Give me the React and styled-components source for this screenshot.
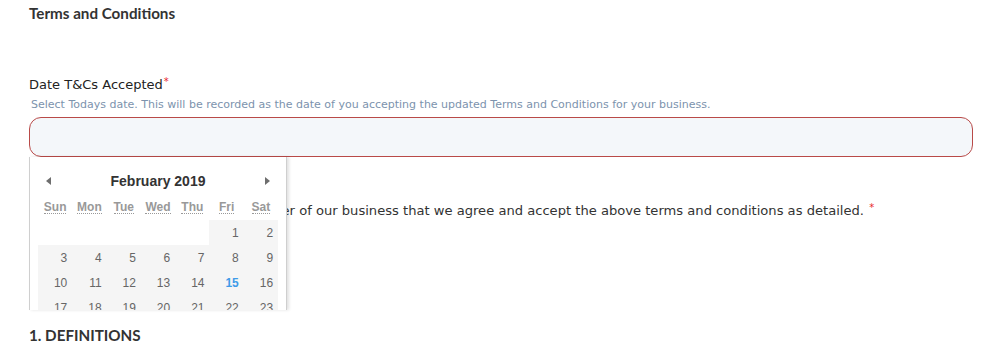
import React from "react";
import styled, { createGlobalStyle } from "styled-components";

const Global = createGlobalStyle`
  html, body { margin: 0; padding: 0; background: #fff; }
  body { font-family: "DejaVu Sans", Verdana, sans-serif; color: #333; }
`;

const Page = styled.div`
  padding: 4px 32px 0 29px;
  width: 1005px;
  box-sizing: border-box;
`;

const Heading = styled.h3`
  margin: 0;
  font-family: Lato, sans-serif;
  font-weight: 700;
  font-size: 15.2px;
  line-height: 18px;
  color: #333;
`;

const Field = styled.div`
  margin-top: 55px;
`;

const Label = styled.label`
  display: block;
  font-size: 13px;
  line-height: 16px;
  color: #222;
`;

const Req = styled.span`
  color: #e8262b;
  font-size: 10px;
  vertical-align: top;
  line-height: 10px;
  margin-left: 1px;
`;

const Help = styled.div`
  margin: 5px 0 0 2px;
  font-size: 11px;
  line-height: 13px;
  color: #7c93ad;
`;

const InputWrap = styled.div`
  position: relative;
  margin-top: 6px;
`;

const Input = styled.div`
  height: 38px;
  border: 1px solid #b94a48;
  border-radius: 12px;
  background: #f4f7fa;
`;

const Popup = styled.div`
  position: absolute;
  top: 100%;
  left: 0;
  width: 258px;
  height: 153px;
  overflow: hidden;
  background: #fff;
  border: 1px solid #cfcfcf;
  border-top: none;
  border-bottom: none;
  box-shadow: 2px 0 3px rgba(0, 0, 0, 0.12);
  padding: 10px 0 0 8px;
  box-sizing: border-box;
  font-family: "Liberation Sans", Arial, sans-serif;
  z-index: 2;
`;

const CalHeader = styled.div`
  display: flex;
  align-items: center;
  justify-content: space-between;
  width: 240px;
  height: 28px;
  padding: 0 8px 0 8px;
  box-sizing: border-box;
`;

const Arrow = styled.span`
  width: 0;
  height: 0;
  border-top: 4px solid transparent;
  border-bottom: 4px solid transparent;
  ${(p) =>
    p.$dir === "left"
      ? "border-right: 5px solid #6e6e6e;"
      : "border-left: 5px solid #6e6e6e;"}
`;

const Month = styled.div`
  font-weight: 700;
  font-size: 14px;
  color: #333;
`;

const Grid = styled.div`
  display: grid;
  grid-template-columns: repeat(7, 34.3px);
  grid-auto-rows: 25px;
`;

const Dow = styled.abbr`
  display: flex;
  align-items: center;
  justify-content: center;
  font-size: 12px;
  font-weight: 700;
  color: #999;
  text-decoration: none;
  span {
    border-bottom: 1px dotted #999;
    line-height: 12px;
  }
`;

const Day = styled.div`
  display: flex;
  align-items: center;
  justify-content: flex-end;
  padding-right: 5px;
  font-size: 12px;
  color: ${(p) => (p.$today ? "#3f9be8" : "#666")};
  font-weight: ${(p) => (p.$today ? 700 : 400)};
  background: ${(p) => (p.$empty ? "transparent" : "#f5f5f5")};
`;

const Statement = styled.p`
  margin: 46px 0 0 0;
  font-size: 13.1px;
  line-height: 16px;
  color: #333;
  padding-left: 119px;
`;

const Section = styled(Heading)`
  margin-top: 107px;
`;

const dows = ["Sun", "Mon", "Tue", "Wed", "Thu", "Fri", "Sat"];
const days = [
  ...Array(5).fill(null),
  ...Array.from({ length: 23 }, (_, i) => i + 1),
];

export default function App() {
  return (
    <>
      <Global />
      <Page>
        <Heading>Terms and Conditions</Heading>
        <Field>
          <Label>
            Date T&amp;Cs Accepted<Req>*</Req>
          </Label>
          <Help>
            Select Todays date. This will be recorded as the date of you
            accepting the updated Terms and Conditions for your business.
          </Help>
          <InputWrap>
            <Input />
            <Popup>
              <CalHeader>
                <Arrow $dir="left" />
                <Month>February 2019</Month>
                <Arrow $dir="right" />
              </CalHeader>
              <Grid>
                {dows.map((d) => (
                  <Dow key={d} title={d}>
                    <span>{d}</span>
                  </Dow>
                ))}
                {days.map((d, i) =>
                  d === null ? (
                    <Day key={i} $empty />
                  ) : (
                    <Day key={i} $today={d === 15}>
                      {d}
                    </Day>
                  )
                )}
              </Grid>
            </Popup>
          </InputWrap>
        </Field>
        <Statement>
          I confirm as the owner of our business that we agree and accept the
          above terms and conditions as detailed. <Req>*</Req>
        </Statement>
        <Section>1. DEFINITIONS</Section>
      </Page>
    </>
  );
}
